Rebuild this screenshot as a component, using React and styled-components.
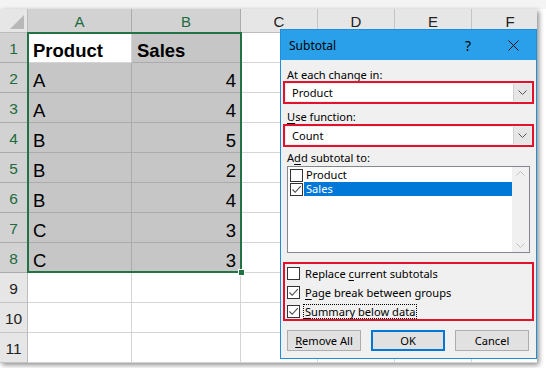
import React from 'react'
import styled, { createGlobalStyle } from 'styled-components'

const Global = createGlobalStyle`
  html, body { margin: 0; padding: 0; overflow: hidden; background: #fff; }
`

const Frame = styled.div`
  position: relative;
  width: 546px;
  height: 368px;
  overflow: hidden;
  padding-top: 9px;
  box-sizing: border-box;
  background: linear-gradient(#f4f4f4 0 9px, #fff 9px);
`

const Sheet = styled.div`
  position: relative;
  display: grid;
  grid-template-columns: 28px 104px 109px 77px 77px 77px 77px;
  grid-template-rows: 24px repeat(11, 30px);
  width: 537px;
  overflow: hidden;
  background: #fff;
  box-shadow: 2px 2px 5px rgba(0, 0, 0, 0.45);
`

const Corner = styled.div`
  position: relative;
  background: #e6e6e6;
  border-right: 1px solid #bcbcbc;
  border-bottom: 1px solid #bcbcbc;
  &::after {
    content: '';
    position: absolute;
    right: 3px;
    bottom: 3px;
    border-left: 14px solid transparent;
    border-bottom: 14px solid #b8b8b8;
  }
`

const ColHead = styled.div`
  display: flex;
  align-items: center;
  justify-content: center;
  background: ${p => (p.$sel ? '#d2d2d2' : '#e6e6e6')};
  color: ${p => (p.$sel ? '#1d6b40' : '#222')};
  border-right: 1px solid ${p => (p.$sel ? '#ababab' : '#c4c4c4')};
  border-bottom: 1px solid #bcbcbc;
  font: 15px 'Liberation Sans', Arial, sans-serif;
  padding-top: 2px;
`

const RowHead = styled.div`
  display: flex;
  align-items: center;
  justify-content: center;
  background: ${p => (p.$sel ? '#d2d2d2' : '#e6e6e6')};
  color: ${p => (p.$sel ? '#1d6b40' : '#222')};
  border-right: 1px solid #bcbcbc;
  border-bottom: 1px solid ${p => (p.$sel ? '#ababab' : '#c4c4c4')};
  font: 15.5px 'Liberation Sans', Arial, sans-serif;
  padding-top: 2px;
`

const Cell = styled.div`
  box-sizing: border-box;
  background: ${p => (p.$sel ? '#c6c6c6' : '#fff')};
  border-right: 1px solid ${p => (p.$sel ? '#ababab' : '#d4d4d4')};
  border-bottom: 1px solid ${p => (p.$sel ? '#ababab' : '#d4d4d4')};
  padding: 6px 4px 0 5px;
  text-align: ${p => (p.$num ? 'right' : 'left')};
  font: ${p => (p.$bold ? 'bold' : 'normal')} 18.5px/24px 'Liberation Sans', Arial, sans-serif;
  color: #000;
  white-space: nowrap;
  overflow: hidden;
`

/* green range outline, drawn over the A1:B8 cells */
const Selection = styled.div`
  position: absolute;
  left: 27px;
  top: 23px;
  width: 215px;
  height: 241px;
  box-sizing: border-box;
  border: 2px solid #217346;
  pointer-events: none;
  &::after {
    content: '';
    position: absolute;
    right: -5px;
    bottom: -5px;
    width: 5px;
    height: 5px;
    background: #217346;
    border: 1px solid #fff;
  }
`

const Dialog = styled.div`
  position: absolute;
  left: 280px;
  top: 29px;
  width: 257px;
  height: 330px;
  box-sizing: border-box;
  border: 1px solid #1c8edb;
  background: #f0f0f0;
  display: flex;
  flex-direction: column;
  font: 11.1px 'Noto Sans', 'Liberation Sans', sans-serif;
  color: #000;
`

const TitleBar = styled.div`
  height: 30px;
  flex: none;
  display: flex;
  align-items: center;
  background: #2ba0ea;
  padding: 0 0 0 8px;
  font-size: 12px;
`

const TitleText = styled.div`
  flex: 1;
`

const TitleBtn = styled.div`
  width: ${p => p.$w}px;
  display: flex;
  justify-content: center;
  align-items: center;
  font-size: 14px;
`

const Body = styled.div`
  flex: 1;
  display: flex;
  flex-direction: column;
  padding: 0 2px 8px 2px;
`

const Label = styled.div`
  height: 14px;
  line-height: 14px;
  padding-left: 4px;
  margin-top: ${p => p.$mt}px;
`

const U = styled.span`
  text-decoration: underline;
  text-underline-offset: 2px;
`

const RedBox = styled.div`
  border: 2px solid #e3112b;
  margin-top: ${p => p.$mt}px;
  height: ${p => p.$h}px;
  box-sizing: border-box;
`

const Combo = styled.div`
  margin: 1px;
  height: calc(100% - 2px);
  display: flex;
  align-items: center;
  background: #fff;
`

const ComboText = styled.div`
  flex: 1;
  padding-left: 6px;
`

const DropBtn = styled.div`
  width: 17px;
  align-self: stretch;
  display: flex;
  align-items: center;
  justify-content: center;
  background: #e6e6e6;
  border-left: 1px solid #d0d0d0;
`

const ListBox = styled.div`
  margin: 1px 4px 0 4px;
  height: 87px;
  box-sizing: border-box;
  border: 1px solid #828790;
  background: #fff;
  display: flex;
`

const ListItems = styled.div`
  flex: 1;
  padding: 1px 0 0 2px;
`

const ListRow = styled.div`
  height: 14px;
  display: flex;
  align-items: center;
`

const ItemText = styled.div`
  flex: 1;
  height: 14px;
  line-height: 14px;
  padding-left: 2px;
  margin-left: 1px;
  background: ${p => (p.$active ? '#0078d7' : 'transparent')};
  color: ${p => (p.$active ? '#fff' : '#000')};
`

const ScrollBar = styled.div`
  width: 17px;
  background: #f0f0f0;
  display: flex;
  flex-direction: column;
  justify-content: space-between;
  align-items: center;
  padding: 4px 0;
`

const Box = styled.div`
  width: 13px;
  height: 13px;
  flex: none;
  box-sizing: border-box;
  border: 1px solid #333;
  background: #fff;
  display: flex;
  align-items: center;
  justify-content: center;
`

const Options = styled.div`
  display: flex;
  flex-direction: column;
  gap: 6px;
  padding: 3px 0 0 2px;
`

const OptRow = styled.div`
  height: 13px;
  display: flex;
  align-items: center;
  gap: 3px;
`

const OptText = styled.div`
  line-height: 13px;
  padding: 0 1px;
  border: 1px dotted ${p => (p.$focus ? '#000' : 'transparent')};
`

const Buttons = styled.div`
  margin-top: 9px;
  display: flex;
  gap: 10px;
  padding: 0 4px;
`

const Button = styled.div`
  width: 74px;
  height: 21px;
  box-sizing: border-box;
  display: flex;
  align-items: center;
  justify-content: center;
  background: #e1e1e1;
  border: ${p => (p.$default ? '2px solid #0078d7' : '1px solid #adadad')};
`

const Chevron = ({ up, color = '#555' }) => (
  <svg width="9" height="5" viewBox="0 0 9 5">
    <path d={up ? 'M0.5 4.5 L4.5 0.5 L8.5 4.5' : 'M0.5 0.5 L4.5 4.5 L8.5 0.5'} fill="none" stroke={color} strokeWidth="1" />
  </svg>
)

const Check = () => (
  <svg width="11" height="11" viewBox="0 0 11 11">
    <path d="M1.5 5.5 L4.2 8.3 L9.8 2.2" fill="none" stroke="#4a4a4a" strokeWidth="1.1" />
  </svg>
)

const CheckBox = ({ checked }) => <Box>{checked && <Check />}</Box>

const data = [
  ['Product', 'Sales'],
  ['A', 4],
  ['A', 4],
  ['B', 5],
  ['B', 2],
  ['B', 4],
  ['C', 3],
  ['C', 3],
  ['', ''],
  ['', ''],
  ['', ''],
]

const letters = ['A', 'B', 'C', 'D', 'E', 'F']

export default function App() {
  return (
    <Frame>
      <Global />
      <Sheet>
        <Corner />
        {letters.map((l, i) => (
          <ColHead key={l} $sel={i < 2}>{l}</ColHead>
        ))}
        {data.map((row, r) => (
          <React.Fragment key={r}>
            <RowHead $sel={r < 8}>{r + 1}</RowHead>
            <Cell $sel={r > 0 && r < 8} $bold={r === 0}>{row[0]}</Cell>
            <Cell $sel={r < 8} $bold={r === 0} $num={r > 0}>{row[1]}</Cell>
            {letters.slice(2).map(l => (
              <Cell key={l} />
            ))}
          </React.Fragment>
        ))}
        <Selection />
      </Sheet>

      <Dialog>
        <TitleBar>
          <TitleText>Subtotal</TitleText>
          <TitleBtn $w={44}>?</TitleBtn>
          <TitleBtn $w={46}>
            <svg width="11" height="11" viewBox="0 0 11 11">
              <path d="M0.5 0.5 L10.5 10.5 M10.5 0.5 L0.5 10.5" stroke="#111" strokeWidth="1" />
            </svg>
          </TitleBtn>
        </TitleBar>
        <Body>
          <Label $mt={8}><U>A</U>t each change in:</Label>
          <RedBox $mt={-1} $h={23}>
            <Combo>
              <ComboText>Product</ComboText>
              <DropBtn><Chevron /></DropBtn>
            </Combo>
          </RedBox>
          <Label $mt={6}><U>U</U>se function:</Label>
          <RedBox $mt={0} $h={23}>
            <Combo>
              <ComboText>Count</ComboText>
              <DropBtn><Chevron /></DropBtn>
            </Combo>
          </RedBox>
          <Label $mt={4}>A<U>d</U>d subtotal to:</Label>
          <ListBox>
            <ListItems>
              <ListRow>
                <CheckBox />
                <ItemText>Product</ItemText>
              </ListRow>
              <ListRow>
                <CheckBox checked />
                <ItemText $active>Sales</ItemText>
              </ListRow>
            </ListItems>
            <ScrollBar>
              <Chevron up color="#c2c2c2" />
              <Chevron color="#c2c2c2" />
            </ScrollBar>
          </ListBox>
          <RedBox $mt={9} $h={59}>
            <Options>
              <OptRow>
                <CheckBox />
                <OptText>Replace <U>c</U>urrent subtotals</OptText>
              </OptRow>
              <OptRow>
                <CheckBox checked />
                <OptText><U>P</U>age break between groups</OptText>
              </OptRow>
              <OptRow>
                <CheckBox checked />
                <OptText $focus><U>S</U>ummary below data</OptText>
              </OptRow>
            </Options>
          </RedBox>
          <Buttons>
            <Button><span><U>R</U>emove All</span></Button>
            <Button $default>OK</Button>
            <Button>Cancel</Button>
          </Buttons>
        </Body>
      </Dialog>
    </Frame>
  )
}
